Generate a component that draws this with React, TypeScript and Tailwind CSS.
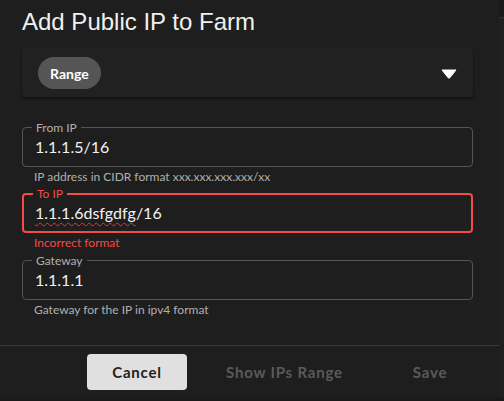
import React from "react";

interface FieldProps {
  label: string;
  value: React.ReactNode;
  helper: string;
  error?: boolean;
}

function OutlinedField({ label, value, helper, error }: FieldProps) {
  return (
    <div>
      <div
        className={`relative flex h-10 items-center rounded-[4px] px-3 ${
          error ? "border-2 border-[#f44a4a] px-[11px]" : "border border-[#555555]"
        }`}
      >
        <span
          className={`absolute left-[9px] bg-[#1e1e1e] px-1 text-[12px] leading-4 ${
            error ? "-top-[9px] left-[8px] text-[#f44a4a]" : "-top-[8px] text-[#b0b0b0]"
          }`}
        >
          {label}
        </span>
        <span className="text-[16px] leading-6 text-[#f2f2f2]">{value}</span>
      </div>
      <p
        className={`ml-3 mt-[2px] text-[12px] leading-4 ${
          error ? "text-[#f44a4a]" : "text-[#b0b0b0]"
        }`}
      >
        {helper}
      </p>
    </div>
  );
}

export default function App() {
  return (
    <div className="h-[401px] w-[504px] overflow-hidden bg-[#1a1a1a] font-['Lato','Noto_Sans',sans-serif]">
      <div className="flex h-[397px]">
        <div className="flex w-[499px] flex-col bg-[#1e1e1e]">
          <div className="px-[22px]">
            <h2 className="mt-2 font-['Liberation_Sans',Arial,sans-serif] text-[24px] leading-7 text-[#f0f0f0]">
              Add Public IP to Farm
            </h2>

            <div className="mt-3 flex w-[451px] items-center justify-between rounded-[4px] bg-[#212121] pb-2 pl-4 pr-4 pt-[9px] shadow-[0_2px_3px_rgba(0,0,0,0.45)]">
              <span className="flex h-8 items-center rounded-full bg-[#555555] px-3 text-[14px] font-bold text-white">
                Range
              </span>
              <svg width="16" height="11" viewBox="0 0 16 11">
                <path d="M1 2 L15 2 L8.8 9.8 Q8 10.6 7.2 9.8 Z" fill="#ffffff" stroke="#ffffff" strokeWidth="1" strokeLinejoin="round" />
              </svg>
            </div>

            <div className="mt-[30px] flex w-[451px] flex-col">
              <OutlinedField
                label="From IP"
                value="1.1.1.5/16"
                helper="IP address in CIDR format xxx.xxx.xxx.xxx/xx"
              />
              <div className="mt-2">
                <OutlinedField
                  label="To IP"
                  error
                  value={
                    <>
                      <span className="underline decoration-[#d93a3a] decoration-wavy decoration-1 underline-offset-[3px]">
                        1.1.1.6dsfgdfg
                      </span>
                      /16
                    </>
                  }
                  helper="Incorrect format"
                />
              </div>
              <div className="mt-[9px]">
                <OutlinedField
                  label="Gateway"
                  value="1.1.1.1"
                  helper="Gateway for the IP in ipv4 format"
                />
              </div>
            </div>
          </div>

          <div className="mt-auto border-t border-[#3a3a3a] pb-[7px] pt-2">
            <div className="flex items-center pl-[87px]">
              <button className="h-9 w-[100px] rounded-[4px] bg-[#e0e0e0] text-[15px] font-bold tracking-[0.8px] text-[#1e1e1e]">
                Cancel
              </button>
              <button className="ml-[23px] h-9 px-4 text-[15px] font-bold tracking-[0.8px] text-[#5a5a5a]">
                Show IPs Range
              </button>
              <button className="ml-[38px] h-9 px-4 text-[15px] font-bold tracking-[0.8px] text-[#5a5a5a]">
                Save
              </button>
            </div>
          </div>
        </div>
        <div className="mt-[17px] flex-1 border-t border-[#333333] bg-[#202020]" />
      </div>
    </div>
  );
}
